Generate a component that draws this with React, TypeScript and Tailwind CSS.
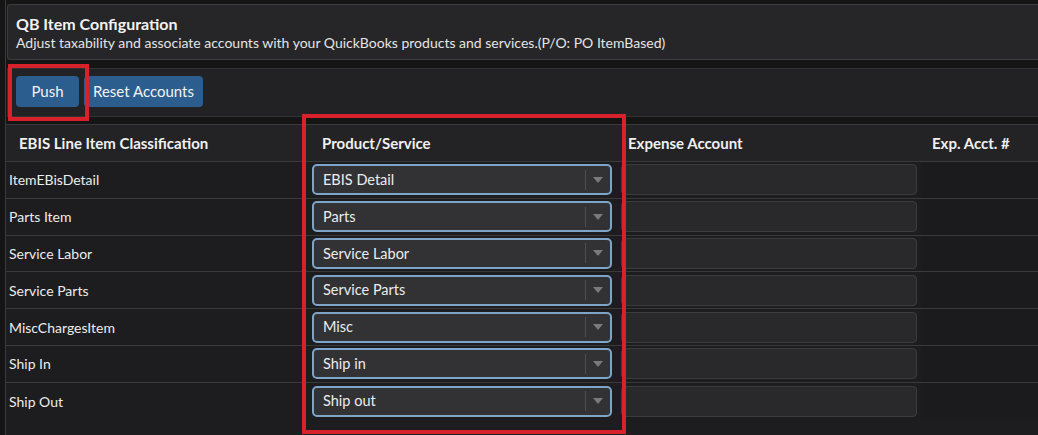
const rows = [
  { name: "ItemEBisDetail", product: "EBIS Detail" },
  { name: "Parts Item", product: "Parts" },
  { name: "Service Labor", product: "Service Labor" },
  { name: "Service Parts", product: "Service Parts" },
  { name: "MiscChargesItem", product: "Misc" },
  { name: "Ship In", product: "Ship in" },
  { name: "Ship Out", product: "Ship out" },
];

const cols = "grid grid-cols-[299px_312px_304px_1fr]";

const SelectBox = ({ value }: { value: string }) => (
  <div className="flex h-[31px] w-[300px] items-center rounded-[5px] border-2 border-[#7fa4c9] bg-[#323234]">
    <span className="flex-1 pl-[9px] text-[14.5px] text-[#ececec]">{value}</span>
    <div className="h-[20px] w-px bg-[#4e4e50]" />
    <div className="flex w-[24px] justify-center">
      <svg width="10" height="6" viewBox="0 0 10 6">
        <path d="M0 0 L10 0 L5 6 Z" fill="#7a7a7c" />
      </svg>
    </div>
  </div>
);

const App = () => {
  return (
    <div
      className="relative h-[435px] w-[1038px] overflow-hidden bg-[#151516]"
      style={{ fontFamily: "Lato, 'Open Sans', sans-serif" }}
    >
      <div className="ml-[5px] flex h-full flex-col border-l border-[#3a3a3c] pt-[4px]">
        {/* Header */}
        <div className="ml-[1px] flex h-[56px] flex-col justify-center rounded-l-[3px] border border-r-0 border-[#3b3b3d] bg-[#262628] pl-[8px] pt-[2px]">
          <h1 className="text-[16px] font-bold leading-[20px] text-[#f2f2f2]">QB Item Configuration</h1>
          <p className="text-[14px] leading-[18px] text-[#e4e4e4]">
            Adjust taxability and associate accounts with your QuickBooks products and services.(P/O: PO ItemBased)
          </p>
        </div>

        {/* Toolbar */}
        <div className="ml-[1px] mt-[8px] flex h-[49px] items-center gap-[5px] border border-r-0 border-[#323234] bg-[#222224] pb-[2px] pl-[8px]">
          <button className="h-[31px] w-[63px] rounded-[4px] bg-[#2b5d8f] text-[15px] text-[#f2f2f2]">Push</button>
          <button className="h-[31px] w-[119px] rounded-[4px] bg-[#2b5d8f] text-[15px] text-[#f2f2f2]">Reset Accounts</button>
        </div>

        {/* Table */}
        <div className="mt-[7px] flex-1 bg-[#1d1d1f]">
          <div className={`${cols} h-[38px] items-center border-y border-[#3a3a3c] bg-[#232325] text-[15px] font-bold text-[#f0f0f0]`}>
            <div className="pl-[13px]">EBIS Line Item Classification</div>
            <div className="pl-[17px]">Product/Service</div>
            <div className="pl-[11px]">Expense Account</div>
            <div className="pl-[11px]">Exp. Acct. #</div>
          </div>
          {rows.map((row, i) => (
            <div
              key={row.name}
              className={`${cols} h-[36.8px] items-center ${i < rows.length - 1 ? "border-b border-[#3a3a3c]" : ""}`}
            >
              <div className="pl-[3px] text-[14px] text-[#ececec]">{row.name}</div>
              <div className="pl-[7px]">
                <SelectBox value={row.product} />
              </div>
              <div className="pl-[4px]">
                <div className="h-[31px] w-[296px] rounded-[4px] border border-[#3c3c3e] bg-[#29292b]" />
              </div>
              <div className="h-full bg-[#1b1b1d]" />
            </div>
          ))}
        </div>
      </div>

      {/* Red highlight annotations */}
      <div className="absolute left-[8px] top-[64px] h-[57px] w-[81px] border-4 border-[#d7222b]" />
      <div className="absolute left-[302px] top-[114px] h-[320px] w-[324px] border-4 border-[#d7222b]" />
    </div>
  );
};

export default App;
